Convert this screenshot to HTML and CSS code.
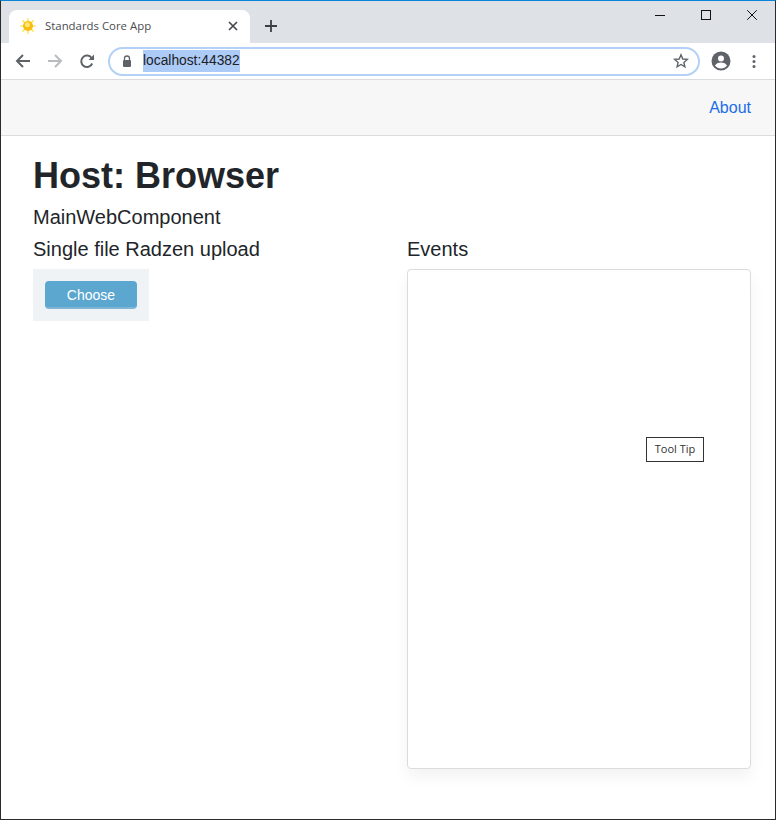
FILE: index.html
```html
<!DOCTYPE html>
<html lang="en">
<head>
<meta charset="utf-8">
<title>Standards Core App</title>
<link rel="stylesheet" href="styles.css">
</head>
<body>
<div class="window">
  <div class="tabstrip">
    <div class="tab">
      <svg class="favicon" viewBox="0 0 16 16" width="16" height="16">
        <g stroke="#ffe55c" stroke-width="1.600" stroke-linecap="round">
          <path d="M8 .8V3M8 13v2.200M.8 8H3M13 8h2.200M2.900 2.900l1.700 1.700M11.400 11.400l1.700 1.700M2.900 13.100l1.700-1.700M11.400 4.600l1.700-1.700"/>
        </g>
        <circle cx="8" cy="8" r="5" fill="#f9bd12"/>
        <circle cx="7.400" cy="6.800" r="2.500" fill="#ffe873"/>
      </svg>
      <span class="tab-title">Standards Core App</span>
      <svg class="tab-close" viewBox="0 0 10 10" width="10" height="10"><path d="M1 1l8 8M9 1l-8 8" stroke="#45484c" stroke-width="1.700"/></svg>
    </div>
    <svg class="new-tab" viewBox="0 0 12 12" width="12" height="12"><path d="M6 0v12M0 6h12" stroke="#3c4043" stroke-width="1.800"/></svg>
    <div class="win-controls">
      <svg viewBox="0 0 10 10" width="10" height="10"><path d="M0 5.500h10" stroke="#111" stroke-width="1"/></svg>
      <svg viewBox="0 0 10 10" width="10" height="10"><rect x=".5" y=".5" width="9" height="9" fill="none" stroke="#111"/></svg>
      <svg viewBox="0 0 10 10" width="10" height="10"><path d="M.2.2l9.600 9.600M9.800.2L.2 9.800" stroke="#111" stroke-width="1"/></svg>
    </div>
  </div>
  <div class="toolbar">
    <svg class="nav-icon nav-back" viewBox="0 0 16 16" width="16" height="16"><path d="M15 8H2M8 2L2 8l6 6" fill="none" stroke="#5f6368" stroke-width="2"/></svg>
    <svg class="nav-icon nav-forward" viewBox="0 0 16 16" width="16" height="16"><path d="M1 8h13M8 2l6 6-6 6" fill="none" stroke="#b9bbbe" stroke-width="2"/></svg>
    <svg class="nav-icon nav-reload" viewBox="0 0 16 16" width="16" height="16"><path d="M13.200 10.500a5.700 5.700 0 1 1-.6-5.500" fill="none" stroke="#5f6368" stroke-width="2"/><path d="M15 1.500V7H9.500z" fill="#5f6368"/></svg>
    <div class="omnibox">
      <svg class="lock" viewBox="0 0 10 12" width="10" height="12"><path d="M2.500 5V3.500a2.500 2.500 0 0 1 5 0V5" fill="none" stroke="#5f6368" stroke-width="1.300"/><rect x="1" y="5" width="8" height="7" rx="1" fill="#5f6368"/></svg>
      <span class="url">localhost:44382</span>
      <svg class="star" viewBox="0 0 16 16" width="16" height="16"><path d="M8 1.800l1.800 4.200 4.500.4-3.400 3 1 4.400L8 11.500l-3.900 2.300 1-4.400-3.400-3 4.500-.4z" fill="none" stroke="#5f6368" stroke-width="1.400"/></svg>
    </div>
    <svg class="avatar" viewBox="0 0 20 20" width="20" height="20"><circle cx="10" cy="10" r="9.500" fill="#5f6368"/><circle cx="10" cy="7.500" r="3" fill="#fff"/><path d="M4 14.500c1.500-2.400 4-3 6-3s4.500.6 6 3a7.500 7.500 0 0 1-12 0z" fill="#fff"/></svg>
    <svg class="menu" viewBox="0 0 4 13" width="4" height="13"><circle cx="2" cy="1.500" r="1.500" fill="#5f6368"/><circle cx="2" cy="6.500" r="1.500" fill="#5f6368"/><circle cx="2" cy="11.500" r="1.500" fill="#5f6368"/></svg>
  </div>
  <nav class="navbar"><a class="about" href="#">About</a></nav>
  <main class="content">
    <h1 class="host">Host: Browser</h1>
    <div class="component">MainWebComponent</div>
    <div class="columns">
      <section class="col-left">
        <h2 class="label">Single file Radzen upload</h2>
        <div class="upload"><button class="choose" type="button">Choose</button></div>
      </section>
      <section class="col-right">
        <h2 class="label">Events</h2>
        <div class="events"></div>
      </section>
    </div>
  </main>
  <div class="tooltip">Tool Tip</div>
</div>
</body>
</html>
```
FILE: styles.css
```css
* { box-sizing: border-box; }
html, body { margin: 0; padding: 0; background: #fff; }
body { font-family: "Liberation Sans", Arial, sans-serif; color: #212529; }
.window {
  position: relative;
  width: 776px;
  height: 820px;
  overflow: hidden;
  display: flex;
  flex-direction: column;
  border: 1px solid #2b2b2b;
  border-top-color: #0a84d8;
  background: #fff;
}
.tabstrip {
  height: 42px;
  flex: none;
  background: #dee1e6;
  display: flex;
  align-items: flex-end;
  padding-left: 8px;
}
.tab {
  width: 241px;
  height: 33px;
  background: #fff;
  border-radius: 8px 8px 0 0;
  display: flex;
  align-items: center;
  padding: 0 12px 1px 11px;
}
.favicon { flex: none; }
.tab-title {
  margin: 0 0 1px 9px;
  flex: 1;
  font: 11.400px "Open Sans", sans-serif;
  color: #4a4d51;
  white-space: nowrap;
}
.tab-close { flex: none; }
.new-tab { margin: 0 0 11px 15px; flex: none; }
.win-controls {
  margin-left: auto;
  align-self: flex-start;
  display: flex;
  align-items: center;
  gap: 36px;
  padding: 9px 18px 0 0;
}
.toolbar {
  height: 37px;
  flex: none;
  background: #fff;
  border-bottom: 1px solid #dadce0;
  display: flex;
  align-items: center;
  padding-left: 14px;
}
.nav-icon { flex: none; }
.nav-forward { margin-left: 16px; }
.nav-reload { margin-left: 16px; }
.omnibox {
  margin-left: 13px;
  width: 592px;
  height: 29px;
  border: 2px solid #b3d1f7;
  border-radius: 15px;
  display: flex;
  align-items: center;
  padding: 0 9px 0 12px;
}
.lock { flex: none; }
.url {
  margin-left: 11px;
  background: #accbf7;
  font: 13.800px/22px "Liberation Sans", sans-serif;
  color: #202124;
  white-space: nowrap;
}
.star { margin-left: auto; flex: none; }
.avatar { margin-left: 11px; flex: none; }
.menu { margin-left: 21px; flex: none; }
.navbar {
  height: 56px;
  flex: none;
  background: #f7f7f7;
  border-bottom: 1px solid #dcdcdc;
  display: flex;
  align-items: center;
  justify-content: flex-end;
  padding-right: 24px;
}
.about { color: #1b6ce8; font-size: 16px; text-decoration: none; }
.content { flex: 1; padding: 0 24px 0 32px; }
.host {
  margin: 18px 0 0;
  font-size: 36px;
  font-weight: 700;
  line-height: 43px;
}
.component { margin-top: 8px; font-size: 20px; line-height: 24px; }
.columns { margin-top: 8px; display: grid; grid-template-columns: 374px 344px; }
.label { margin: 0; font-size: 20px; font-weight: 400; line-height: 24px; }
.upload {
  margin-top: 8px;
  width: 116px;
  height: 52px;
  background: #eff3f6;
  padding: 12px;
}
.choose {
  display: block;
  width: 92px;
  height: 28px;
  padding: 2px 0 0;
  border: 0;
  border-bottom: 2px solid #7fb5d5;
  border-radius: 4px;
  background: #5ba7cf;
  color: #fff;
  font: 14px "Liberation Sans", sans-serif;
}
.events {
  margin-top: 8px;
  height: 500px;
  background: #fff;
  border: 1px solid #dcdcdc;
  border-radius: 4px;
  box-shadow: 0 8px 16px rgba(0, 0, 0, .05);
}
.tooltip {
  position: absolute;
  left: 645px;
  top: 436px;
  width: 58px;
  height: 25px;
  border: 1px solid #333;
  background: #fff;
  color: #333;
  font: 11px/21px "Open Sans", sans-serif;
  text-align: center;
}
```
